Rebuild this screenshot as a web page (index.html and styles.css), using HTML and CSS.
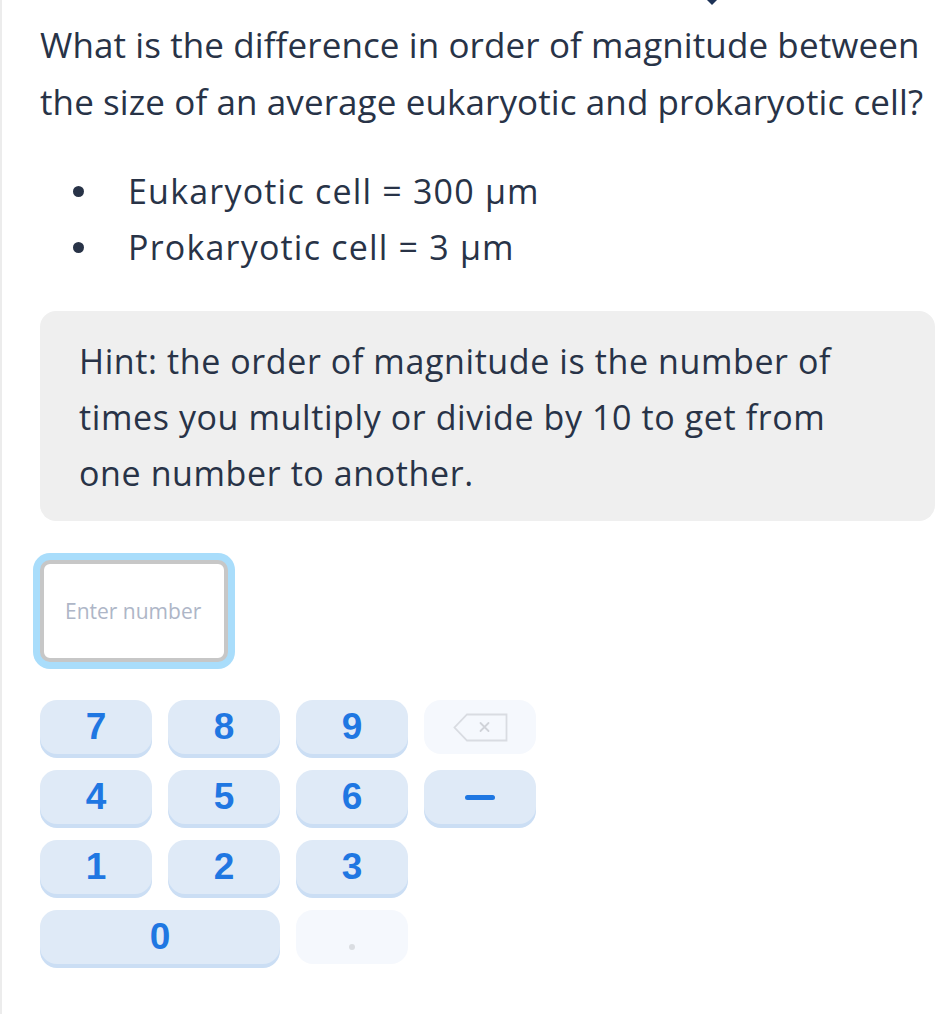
FILE: index.html
```html
<!DOCTYPE html>
<html>
<head>
<meta charset="UTF-8">
<title>Question</title>
<link rel="stylesheet" href="styles.css">
</head>
<body>
<div class="page">
	<div class="pointer"></div>
	<h1 class="question">What is the difference in order of magnitude between the size of an average eukaryotic and prokaryotic cell?</h1>
	<ul class="facts">
		<li>Eukaryotic cell = 300 µm</li>
		<li>Prokaryotic cell = 3 µm</li>
	</ul>
	<div class="hint">Hint: the order of magnitude is the number of times you multiply or divide by 10 to get from one number to another.</div>
	<div class="answer">
		<input type="text" class="answer-input" placeholder="Enter number">
	</div>
	<div class="keypad">
		<button class="key">7</button>
		<button class="key">8</button>
		<button class="key">9</button>
		<button class="key key-off">
			<svg width="55" height="29" viewBox="0 0 55 29">
				<path d="M14 1.5 H53.5 V27.5 H14 L1.5 14.5 Z" fill="none" stroke="#d9dce2" stroke-width="1.8"/>
				<path d="M27.5 10 L35.5 18 M35.5 10 L27.5 18" stroke="#d0d3d9" stroke-width="1.8" stroke-linecap="round"/>
			</svg>
		</button>
		<button class="key">4</button>
		<button class="key">5</button>
		<button class="key">6</button>
		<button class="key"><span class="minus"></span></button>
		<button class="key">1</button>
		<button class="key">2</button>
		<button class="key">3</button>
		<span></span>
		<button class="key key-wide">0</button>
		<button class="key key-off"><span class="dot"></span></button>
	</div>
</div>
</body>
</html>
```

FILE: styles.css
```css
html, body{
	margin:0;
	padding:0;
	background:#fff;
}
.page{
	min-height:1014px;
	box-sizing:border-box;
	border-left:2px solid #ececec;
	padding:0 11px 0 38px;
	font-family:"Open Sans", "Noto Sans", sans-serif;
	color:#283347;
}
.pointer{
	width:0;
	height:0;
	margin-left:667px;
	border-left:5px solid transparent;
	border-right:5px solid transparent;
	border-top:5px solid #1d3257;
}
.question{
	margin:11px 0 0;
	font-size:35px;
	font-weight:normal;
	line-height:57px;
	letter-spacing:0.1px;
}
.facts{
	margin:33px 0 0;
	padding:0 0 0 88px;
	font-size:34px;
	letter-spacing:1.2px;
	line-height:56px;
	list-style:none;
}
.facts li{
	position:relative;
}
.facts li::before{
	content:"";
	position:absolute;
	left:-55px;
	top:23px;
	width:11px;
	height:11px;
	border-radius:50%;
	background:#283347;
}
.hint{
	margin-top:36px;
	background:#efefef;
	border-radius:16px;
	padding:22px 40px 20px 39px;
	font-size:34px;
	letter-spacing:0.6px;
	line-height:56px;
}
.answer{
	margin-top:39px;
}
.answer-input{
	display:block;
	width:188px;
	height:102px;
	box-sizing:border-box;
	margin-left:0;
	border:4px solid #c7c7c7;
	border-radius:10px;
	box-shadow:0 0 0 7px #a9ddfb;
	padding:0 0 0 21px;
	outline:none;
	font-family:"Open Sans", sans-serif;
	font-size:21px;
	color:#283347;
}
.answer-input::placeholder{
	color:#aeb6c7;
}
.keypad{
	margin-top:38px;
	display:grid;
	grid-template-columns:repeat(4, 112px);
	grid-auto-rows:58px;
	column-gap:16px;
	row-gap:12px;
}
.key{
	display:flex;
	align-items:center;
	justify-content:center;
	box-sizing:border-box;
	padding:0;
	border:none;
	border-radius:17px;
	background:#dfeaf7;
	box-shadow:0 4px 0 #cbdef4;
	height:54px;
	font-family:"Liberation Sans", Arial, sans-serif;
	font-weight:bold;
	font-size:37px;
	color:#1f77e2;
}
.key-off{
	background:#f5f8fd;
	box-shadow:none;
	height:54px;
}
.key-wide{
	grid-column:span 2;
}
.minus{
	width:30px;
	height:5px;
	border-radius:3px;
	background:#1f77e2;
}
.dot{
	width:6px;
	height:6px;
	margin-top:20px;
	border-radius:50%;
	background:#dadde2;
}
```
